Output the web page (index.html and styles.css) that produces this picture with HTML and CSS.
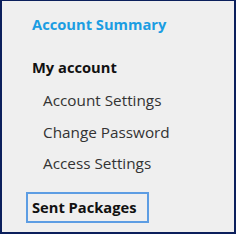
FILE: index.html
```html
<!DOCTYPE html>
<html>

<head>
    <meta charset="utf-8">
    <title>Account menu</title>

    <link rel="stylesheet" href="styles.css">
</head>

<body>

    <nav class="side-menu">
        <a class="summary-link" href="#">Account Summary</a>

        <h3 class="menu-title">My account</h3>
        <ul class="sub-menu">
            <li><a href="#">Account Settings</a></li>
            <li><a href="#">Change Password</a></li>
            <li><a href="#">Access Settings</a></li>
        </ul>

        <a class="sent-link" href="#">Sent Packages</a>
    </nav>

</body>

</html>
```

FILE: styles.css
```css
/* Page */

body {
    margin: 0;
    font-family: "Open Sans", "DejaVu Sans", sans-serif;
}

.side-menu {
    display: flex;
    flex-direction: column;
    align-items: flex-start;
    width: 236px;
    height: 234px;
    box-sizing: border-box;
    padding: 13px 0 0 24px;
    background: #efefef;
    border: 2px solid #0b1f5c;
    border-top-width: 1px;
}

.side-menu a {
    text-decoration: none;
}

/* Top link */

.summary-link {
    margin-left: 6px;
    font-size: 14.7px;
    font-weight: bold;
    line-height: 20px;
    color: #1b9de2;
}

.menu-title {
    margin: 23px 0 0 6px;
    font-size: 14.7px;
    font-weight: bold;
    line-height: 20px;
    color: #111;
}

/* Sub items */

.sub-menu {
    list-style: none;
    margin: 12px 0 0 17px;
    padding: 0;
}

.sub-menu li {
    height: 31.7px;
}

.sub-menu a {
    font-size: 15.3px;
    line-height: 20px;
    color: #333;
}

/* Selected item */

.sent-link {
    margin-top: 7.5px;
    padding: 3px 10px 4px 4px;
    font-size: 14.7px;
    font-weight: bold;
    line-height: 20px;
    color: #111;
    border: 2px solid #5d9de3;
}
```
